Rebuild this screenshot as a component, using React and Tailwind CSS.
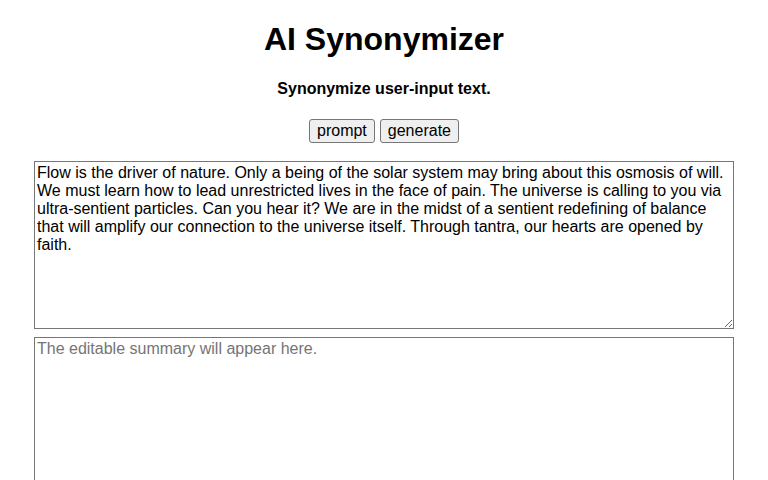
const App = () => {
  return (
    <div className="flex flex-col items-center font-['Liberation_Sans',Arial,sans-serif] text-black bg-white min-h-[480px]">
      <h1 className="mt-[21.44px] text-[32px] leading-[36.8px] font-bold">AI Synonymizer</h1>

      <h4 className="mt-[21.28px] text-base leading-[18.4px] font-bold">Synonymize user-input text.</h4>

      <div className="mt-[21.28px] flex gap-[5px]">
        <button className="h-6 px-[7px] text-base leading-[18px] bg-[#efefef] border border-[#767676] rounded-[3px]">
          prompt
        </button>
        <button className="h-6 px-[7px] text-base leading-[18px] bg-[#efefef] border border-[#767676] rounded-[3px]">
          generate
        </button>
      </div>

      <textarea
        className="mt-[18px] w-[700px] h-[168px] p-[2px] text-base leading-[18px] border border-[#767676] resize-y"
        defaultValue="Flow is the driver of nature. Only a being of the solar system may bring about this osmosis of will. We must learn how to lead unrestricted lives in the face of pain. The universe is calling to you via ultra-sentient particles. Can you hear it? We are in the midst of a sentient redefining of balance that will amplify our connection to the universe itself. Through tantra, our hearts are opened by faith."
      />

      <textarea
        className="mt-2 w-[700px] h-[168px] p-[2px] text-base leading-[18px] border border-[#767676] resize-y placeholder:text-[#757575]"
        placeholder="The editable summary will appear here."
      />
    </div>
  );
};

export default App;
